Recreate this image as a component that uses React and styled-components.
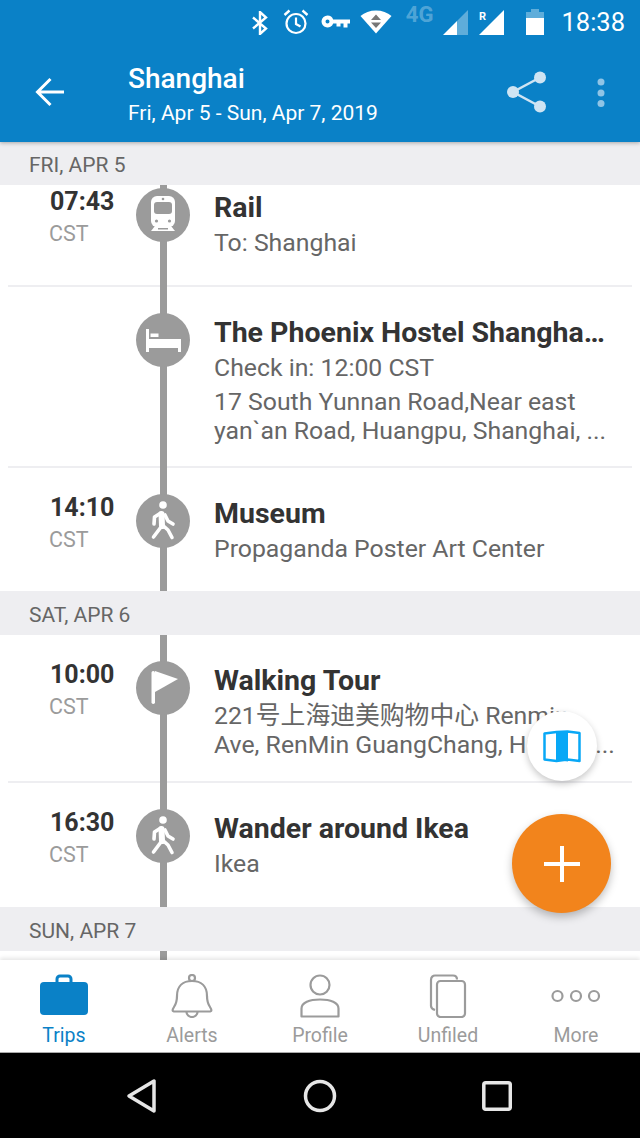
import React from 'react'
import styled, { createGlobalStyle } from 'styled-components'

const GlobalStyle = createGlobalStyle`
  html, body {
    margin: 0;
    padding: 0;
    background: #fff;
  }
  * { box-sizing: border-box; }
`

const Screen = styled.div`
  position: relative;
  width: 640px;
  height: 1138px;
  overflow: hidden;
  display: flex;
  flex-direction: column;
  background: #fff;
  font-family: Roboto, 'Noto Sans CJK SC', sans-serif;
`

const Header = styled.header`
  position: relative;
  z-index: 2;
  background: #0a81c7;
  color: #fff;
  box-shadow: 0 1px 4px rgba(0, 0, 0, 0.3);
`

const StatusBar = styled.div`
  height: 48px;
  display: flex;
  align-items: flex-start;
  justify-content: flex-end;
  padding-right: 15px;
`

const StatusSvg = styled.svg`
  display: block;
  flex: none;
  margin-left: ${p => p.$left}px;
  margin-top: ${p => p.$top}px;
`

const NetworkLabel = styled.span`
  margin-left: 14px;
  margin-top: 3px;
  font-size: 22px;
  line-height: 24px;
  font-weight: 700;
  color: rgba(255, 255, 255, 0.3);
`

const Clock = styled.span`
  margin-left: 17px;
  margin-top: 7px;
  font-size: 25.5px;
  line-height: 30px;
`

const AppBar = styled.div`
  height: 94px;
  display: flex;
  align-items: flex-start;
  padding-left: 35px;
  padding-right: 35px;
`

const IconSlot = styled.svg`
  display: block;
  flex: none;
  margin-top: ${p => p.$top}px;
  margin-left: ${p => p.$left || 0}px;
`

const TitleBlock = styled.div`
  flex: 1;
  margin-left: 63px;
  padding-top: 14px;
`

const TripTitle = styled.div`
  font-size: 28px;
  line-height: 34px;
  font-weight: 500;
`

const TripDates = styled.div`
  font-size: 21px;
  line-height: 30px;
  margin-top: 2px;
`

const List = styled.main`
  flex: 1;
  min-height: 0;
  overflow: hidden;
`

const DayHeader = styled.div`
  height: ${p => p.$height}px;
  display: flex;
  align-items: center;
  padding-left: 29px;
  padding-top: 3px;
  background: #eeeef1;
  color: #666;
  font-size: 21px;
`

const Row = styled.section`
  position: relative;
  height: ${p => p.$height}px;
  display: flex;
  padding-left: 49px;

  &::after {
    content: '';
    display: ${p => (p.$divider ? 'block' : 'none')};
    position: absolute;
    left: 8px;
    right: 8px;
    bottom: 0;
    height: 2px;
    background: #eeeef1;
  }
`

const TimeCol = styled.div`
  width: 87px;
  flex: none;
  padding-top: ${p => p.$top + 1}px;
`

const Time = styled.div`
  padding-left: 1px;
  font-size: 25px;
  line-height: 26px;
  font-weight: 700;
  color: #333;
`

const Zone = styled.div`
  margin-top: 6px;
  font-size: 21.5px;
  line-height: 26px;
  color: #9b9b9b;
`

const Rail = styled.div`
  position: relative;
  z-index: 1;
  width: 54px;
  flex: none;
  padding-top: ${p => p.$top}px;

  &::before {
    content: '';
    position: absolute;
    top: 0;
    bottom: 0;
    left: 24px;
    width: 7px;
    background: #9b9b9b;
  }
`

const Badge = styled.div`
  position: relative;
  width: 54px;
  height: 54px;
  border-radius: 50%;
  background: #9b9b9b;
`

const BadgeIcon = styled.svg`
  display: block;
`

const Content = styled.div`
  flex: 1;
  min-width: 0;
  margin-left: 24px;
  padding-top: ${p => p.$top + 1}px;
`

const Title = styled.div`
  font-size: 28.5px;
  line-height: 37px;
  font-weight: 700;
  color: #333;
  white-space: nowrap;
`

const Detail = styled.div`
  margin-top: 2px;
  font-size: 24.8px;
  line-height: 29px;
  color: #666;
  white-space: nowrap;

  & + & {
    margin-top: 5px;
  }
`

const RailTail = styled.div`
  height: 9px;
  margin-left: 160px;
  width: 7px;
  background: #9b9b9b;
`

const TabBar = styled.nav`
  position: relative;
  z-index: 2;
  height: 93px;
  display: flex;
  background: #fff;
  border-bottom: 1px solid #aaa;
  box-shadow: 0 -2px 4px rgba(0, 0, 0, 0.1);
`

const Tab = styled.div`
  flex: 1;
  display: flex;
  flex-direction: column;
  align-items: center;
  padding-top: 14px;
  color: ${p => (p.$active ? '#0a81c7' : '#9b9b9b')};
`

const TabIcon = styled.svg`
  display: block;
  width: 52px;
  height: 44px;
`

const TabLabel = styled.span`
  margin-top: 5px;
  font-size: 19.5px;
  line-height: 26px;
`

const NavBar = styled.div`
  height: 85px;
  background: #000;
  display: flex;
  align-items: center;
  justify-content: center;
  gap: 145px;
  padding-right: 2px;
`

const MapButton = styled.button`
  position: absolute;
  left: 527px;
  top: 711px;
  z-index: 3;
  width: 70px;
  height: 70px;
  padding: 0;
  border: 0;
  border-radius: 50%;
  background: #fff;
  display: flex;
  align-items: center;
  justify-content: center;
  box-shadow: 0 3px 7px rgba(0, 0, 0, 0.22);
`

const AddButton = styled.button`
  position: absolute;
  left: 512px;
  top: 814px;
  z-index: 3;
  width: 99px;
  height: 99px;
  padding: 0;
  border: 0;
  border-radius: 50%;
  background: #f2841c;
  display: flex;
  align-items: center;
  justify-content: center;
  box-shadow: 0 4px 9px rgba(0, 0, 0, 0.25);
`

const TrainIcon = () => (
  <BadgeIcon width="54" height="54" viewBox="0 0 54 54">
    <rect x="15" y="8" width="24" height="31" rx="6" fill="#fff" />
    <rect x="18" y="14" width="18" height="12" rx="3" fill="#9b9b9b" />
    <circle cx="27" cy="11" r="1.3" fill="#9b9b9b" />
    <circle cx="20.5" cy="33" r="1.6" fill="#9b9b9b" />
    <circle cx="33.5" cy="33" r="1.6" fill="#9b9b9b" />
    <path d="M19 38l-4 5h24l-4-5" fill="#fff" />
    <rect x="22" y="40" width="10" height="1.5" fill="#9b9b9b" />
  </BadgeIcon>
)

const BedIcon = () => (
  <BadgeIcon width="54" height="54" viewBox="0 0 54 54">
    <path fill="#fff" d="M10 16h3v10h32v13h-3v-4H13v4h-3z" />
    <rect x="14.5" y="20.5" width="8" height="3.5" fill="#fff" />
    <path d="M13.5 33.5h28.5v-6H13.5z" fill="#fff" />
  </BadgeIcon>
)

const WalkIcon = () => (
  <BadgeIcon width="54" height="54" viewBox="0 0 54 54">
    <circle cx="27" cy="11" r="3.8" fill="#fff" />
    <g fill="none" stroke="#fff" strokeWidth="3.6" strokeLinecap="round" strokeLinejoin="round">
      <path d="M25.5 20l.5 12" strokeWidth="6" />
      <path d="M24 19.500l-5.500 3.500-.5 7" />
      <path d="M29 21l3 6 5 3" />
      <path d="M25 33l-7.500 10" />
      <path d="M27.500 32l4.500 4 4 7.500" />
    </g>
  </BadgeIcon>
)

const FlagIcon = () => (
  <BadgeIcon width="54" height="54" viewBox="0 0 54 54">
    <rect x="15.500" y="10" width="3.500" height="33" rx="1.700" fill="#fff" />
    <path d="M19 10l23 8-23 13z" fill="#fff" />
  </BadgeIcon>
)

const badgeIcons = {
  train: TrainIcon,
  bed: BedIcon,
  walk: WalkIcon,
  flag: FlagIcon,
}

const sections = [
  {
    label: 'FRI, APR 5',
    height: 43,
    rows: [
      { height: 102, top: 3, time: '07:43', icon: 'train', title: 'Rail', details: [['To: Shanghai']], divider: true },
      {
        height: 181,
        top: 26,
        icon: 'bed',
        title: 'The Phoenix Hostel Shangha…',
        details: [['Check in: 12:00 CST'], ['17 South Yunnan Road,Near east', 'yan`an Road, Huangpu, Shanghai, ...']],
        divider: true,
      },
      { height: 123, top: 26, time: '14:10', icon: 'walk', title: 'Museum', details: [['Propaganda Poster Art Center']] },
    ],
  },
  {
    label: 'SAT, APR 6',
    height: 44,
    rows: [
      {
        height: 148,
        top: 26,
        time: '10:00',
        icon: 'flag',
        title: 'Walking Tour',
        details: [['221号上海迪美购物中心 Renmin', 'Ave, RenMin GuangChang, Huangp...']],
        divider: true,
      },
      { height: 124, top: 26, time: '16:30', icon: 'walk', title: 'Wander around Ikea', details: [['Ikea']] },
    ],
  },
  { label: 'SUN, APR 7', height: 44, rows: [] },
]

const tabs = [
  {
    label: 'Trips',
    active: true,
    icon: (
      <>
        <path fill="none" stroke="currentColor" strokeWidth="3" d="M19 8V5a3 3 0 0 1 3-3h8a3 3 0 0 1 3 3v3" />
        <rect x="2" y="8" width="48" height="33" rx="4" fill="currentColor" />
      </>
    ),
  },
  {
    label: 'Alerts',
    icon: (
      <g fill="none" stroke="currentColor" strokeWidth="2.200" strokeLinejoin="round">
        <circle cx="26" cy="4" r="3" />
        <path d="M8 33c2-3 3-5 3-11 0-10 6-15 15-15s15 5 15 15c0 6 1 8 3 11 2 3 2 4.500-1 4.500H9c-3 0-3-1.500-1-4.500z" />
        <path d="M20.500 38a5.500 5 0 0 0 11 0" />
      </g>
    ),
  },
  {
    label: 'Profile',
    icon: (
      <g fill="none" stroke="currentColor" strokeWidth="2.200" strokeLinejoin="round">
        <circle cx="26" cy="11" r="9.500" />
        <path d="M7.500 42.500v-8c0-6 8-9 18.500-9s18.500 3 18.500 9v8z" />
      </g>
    ),
  },
  {
    label: 'Unfiled',
    icon: (
      <g fill="none" stroke="currentColor" strokeWidth="2.200" strokeLinejoin="round">
        <path d="M13 36c-3-1-4-2-4-4V6c0-3 2-4.500 4-4.500h18c2 0 4 1 4 4" />
        <rect x="15" y="7" width="28" height="36" rx="3.500" />
      </g>
    ),
  },
  {
    label: 'More',
    icon: (
      <g fill="none" stroke="currentColor" strokeWidth="2.200">
        <circle cx="7.500" cy="22" r="5" />
        <circle cx="26" cy="22" r="5" />
        <circle cx="44" cy="22" r="5" />
      </g>
    ),
  },
]

const TimelineRow = ({ row }) => {
  const Icon = badgeIcons[row.icon]
  return (
    <Row $height={row.height} $divider={row.divider}>
      <TimeCol $top={row.top}>
        {row.time && (
          <>
            <Time>{row.time}</Time>
            <Zone>CST</Zone>
          </>
        )}
      </TimeCol>
      <Rail $top={row.top}>
        <Badge>
          <Icon />
        </Badge>
      </Rail>
      <Content $top={row.top}>
        <Title>{row.title}</Title>
        {row.details.map(lines => (
          <Detail key={lines[0]}>
            {lines.map(line => (
              <div key={line}>{line}</div>
            ))}
          </Detail>
        ))}
      </Content>
    </Row>
  )
}

export default function App() {
  return (
    <Screen>
      <GlobalStyle />

      <Header>
        <StatusBar>
          <StatusSvg $left={0} $top={11} width="18" height="24" viewBox="0 0 18 24">
            <path fill="none" stroke="#fff" strokeWidth="2.400" d="M2 6.500l13 11-6 5.500V1l6 5.500-13 11" />
          </StatusSvg>
          <StatusSvg $left={14} $top={9} width="26" height="26" viewBox="0 0 26 26">
            <g fill="none" stroke="#fff" strokeWidth="2.200">
              <circle cx="13" cy="14.500" r="9.500" />
              <path d="M13 8.500v6.500l4.500 2.500" />
              <path d="M1.500 6l5-4.500M24.500 6l-5-4.500" strokeWidth="2.400" />
            </g>
          </StatusSvg>
          <StatusSvg $left={12} $top={15} width="29" height="14" viewBox="0 0 29 14">
            <path fill="#fff" fillRule="evenodd" d="M6.500 0.500a6 6 0 0 1 5.700 4H29v4h-2.500v4h-4v-4h-3v3h-4v-3h-3.300a6 6 0 1 1-5.700-8zm0 4a2 2 0 1 0 0 4 2 2 0 0 0 0-4z" />
          </StatusSvg>
          <StatusSvg $left={10} $top={10} width="32" height="24" viewBox="0 0 32 24">
            <path fill="#fff" d="M16 0.500c6 0 11.500 2 15.500 5.500L16 23.500 0.500 6C4.500 2.500 10 0.500 16 0.500z" />
            <path fill="#777" d="M16 4.500l5 5.500H11zM11 12.500h10l-5 5.500z" />
          </StatusSvg>
          <NetworkLabel>4G</NetworkLabel>
          <StatusSvg $left={10} $top={10} width="25" height="25" viewBox="0 0 25 25">
            <path fill="#fff" d="M0 25L14 11v14z" />
            <path fill="#fff" fillOpacity="0.35" d="M14 11L25 0v25H14z" />
          </StatusSvg>
          <StatusSvg $left={11} $top={9} width="25" height="26" viewBox="0 0 25 26">
            <path fill="#fff" d="M0 26L25 1v25z" />
            <text x="0" y="11" fill="#fff" fontSize="11" fontWeight="700" fontFamily="Roboto, sans-serif">R</text>
          </StatusSvg>
          <StatusSvg $left={22} $top={8} width="18" height="27" viewBox="0 0 18 27">
            <path fill="#fff" fillOpacity="0.35" d="M5 1h8v3h5v6H0V4h5z" />
            <rect x="0" y="10" width="18" height="17" fill="#fff" />
          </StatusSvg>
          <Clock>18:38</Clock>
        </StatusBar>

        <AppBar>
          <IconSlot $top={29} width="30" height="30" viewBox="0 0 30 30">
            <path fill="none" stroke="#fff" strokeWidth="3" d="M29 15H3M15.500 2L2.500 15l13 13" />
          </IconSlot>
          <TitleBlock>
            <TripTitle>Shanghai</TripTitle>
            <TripDates>Fri, Apr 5 - Sun, Apr 7, 2019</TripDates>
          </TitleBlock>
          <IconSlot $top={23} width="42" height="42" viewBox="0 0 42 42" fill="#cfe4f3">
            <circle cx="7" cy="21" r="6" />
            <circle cx="34" cy="6.500" r="6" />
            <circle cx="34" cy="35.500" r="6" />
            <path fill="none" stroke="#cfe4f3" strokeWidth="2.500" d="M34 6.500L7 21l27 14.500" />
          </IconSlot>
          <IconSlot $top={30} $left={49} width="8" height="30" viewBox="0 0 8 30" fill="#8fc4e6">
            <circle cx="4" cy="4" r="3.500" />
            <circle cx="4" cy="15" r="3.500" />
            <circle cx="4" cy="25.500" r="3.500" />
          </IconSlot>
        </AppBar>
      </Header>

      <List>
        {sections.map(section => (
          <React.Fragment key={section.label}>
            <DayHeader $height={section.height}>{section.label}</DayHeader>
            {section.rows.map(row => (
              <TimelineRow key={row.title} row={row} />
            ))}
          </React.Fragment>
        ))}
        <RailTail />
      </List>

      <TabBar>
        {tabs.map(tab => (
          <Tab key={tab.label} $active={tab.active}>
            <TabIcon viewBox="0 0 52 44">{tab.icon}</TabIcon>
            <TabLabel>{tab.label}</TabLabel>
          </Tab>
        ))}
      </TabBar>

      <NavBar>
        <svg width="32" height="36" viewBox="0 0 32 36">
          <path fill="none" stroke="#e6e6e6" strokeWidth="3.500" strokeLinejoin="round" d="M28 3v30L3 18z" />
        </svg>
        <svg width="34" height="34" viewBox="0 0 34 34">
          <circle cx="17" cy="17" r="14.500" fill="none" stroke="#e6e6e6" strokeWidth="3.500" />
        </svg>
        <svg width="30" height="30" viewBox="0 0 30 30">
          <rect x="1.800" y="1.800" width="26.500" height="26.500" rx="2" fill="none" stroke="#e6e6e6" strokeWidth="3.500" />
        </svg>
      </NavBar>

      <MapButton aria-label="Map">
        <svg width="38" height="33" viewBox="0 0 38 33">
          <path fill="#08a8f6" d="M13 3l12-1.500v30L13 30z" />
          <path fill="none" stroke="#08a8f6" strokeWidth="2.500" strokeLinejoin="round" d="M1.500 3.500l12-1.500 11-0.500 12 1.500v28l-12-1.500-11 1.500-12-1.500z" />
        </svg>
      </MapButton>
      <AddButton aria-label="Add">
        <svg width="36" height="36" viewBox="0 0 36 36">
          <path fill="#fff" d="M16 0h4v16h16v4H20v16h-4V20H0v-4h16z" />
        </svg>
      </AddButton>
    </Screen>
  )
}
